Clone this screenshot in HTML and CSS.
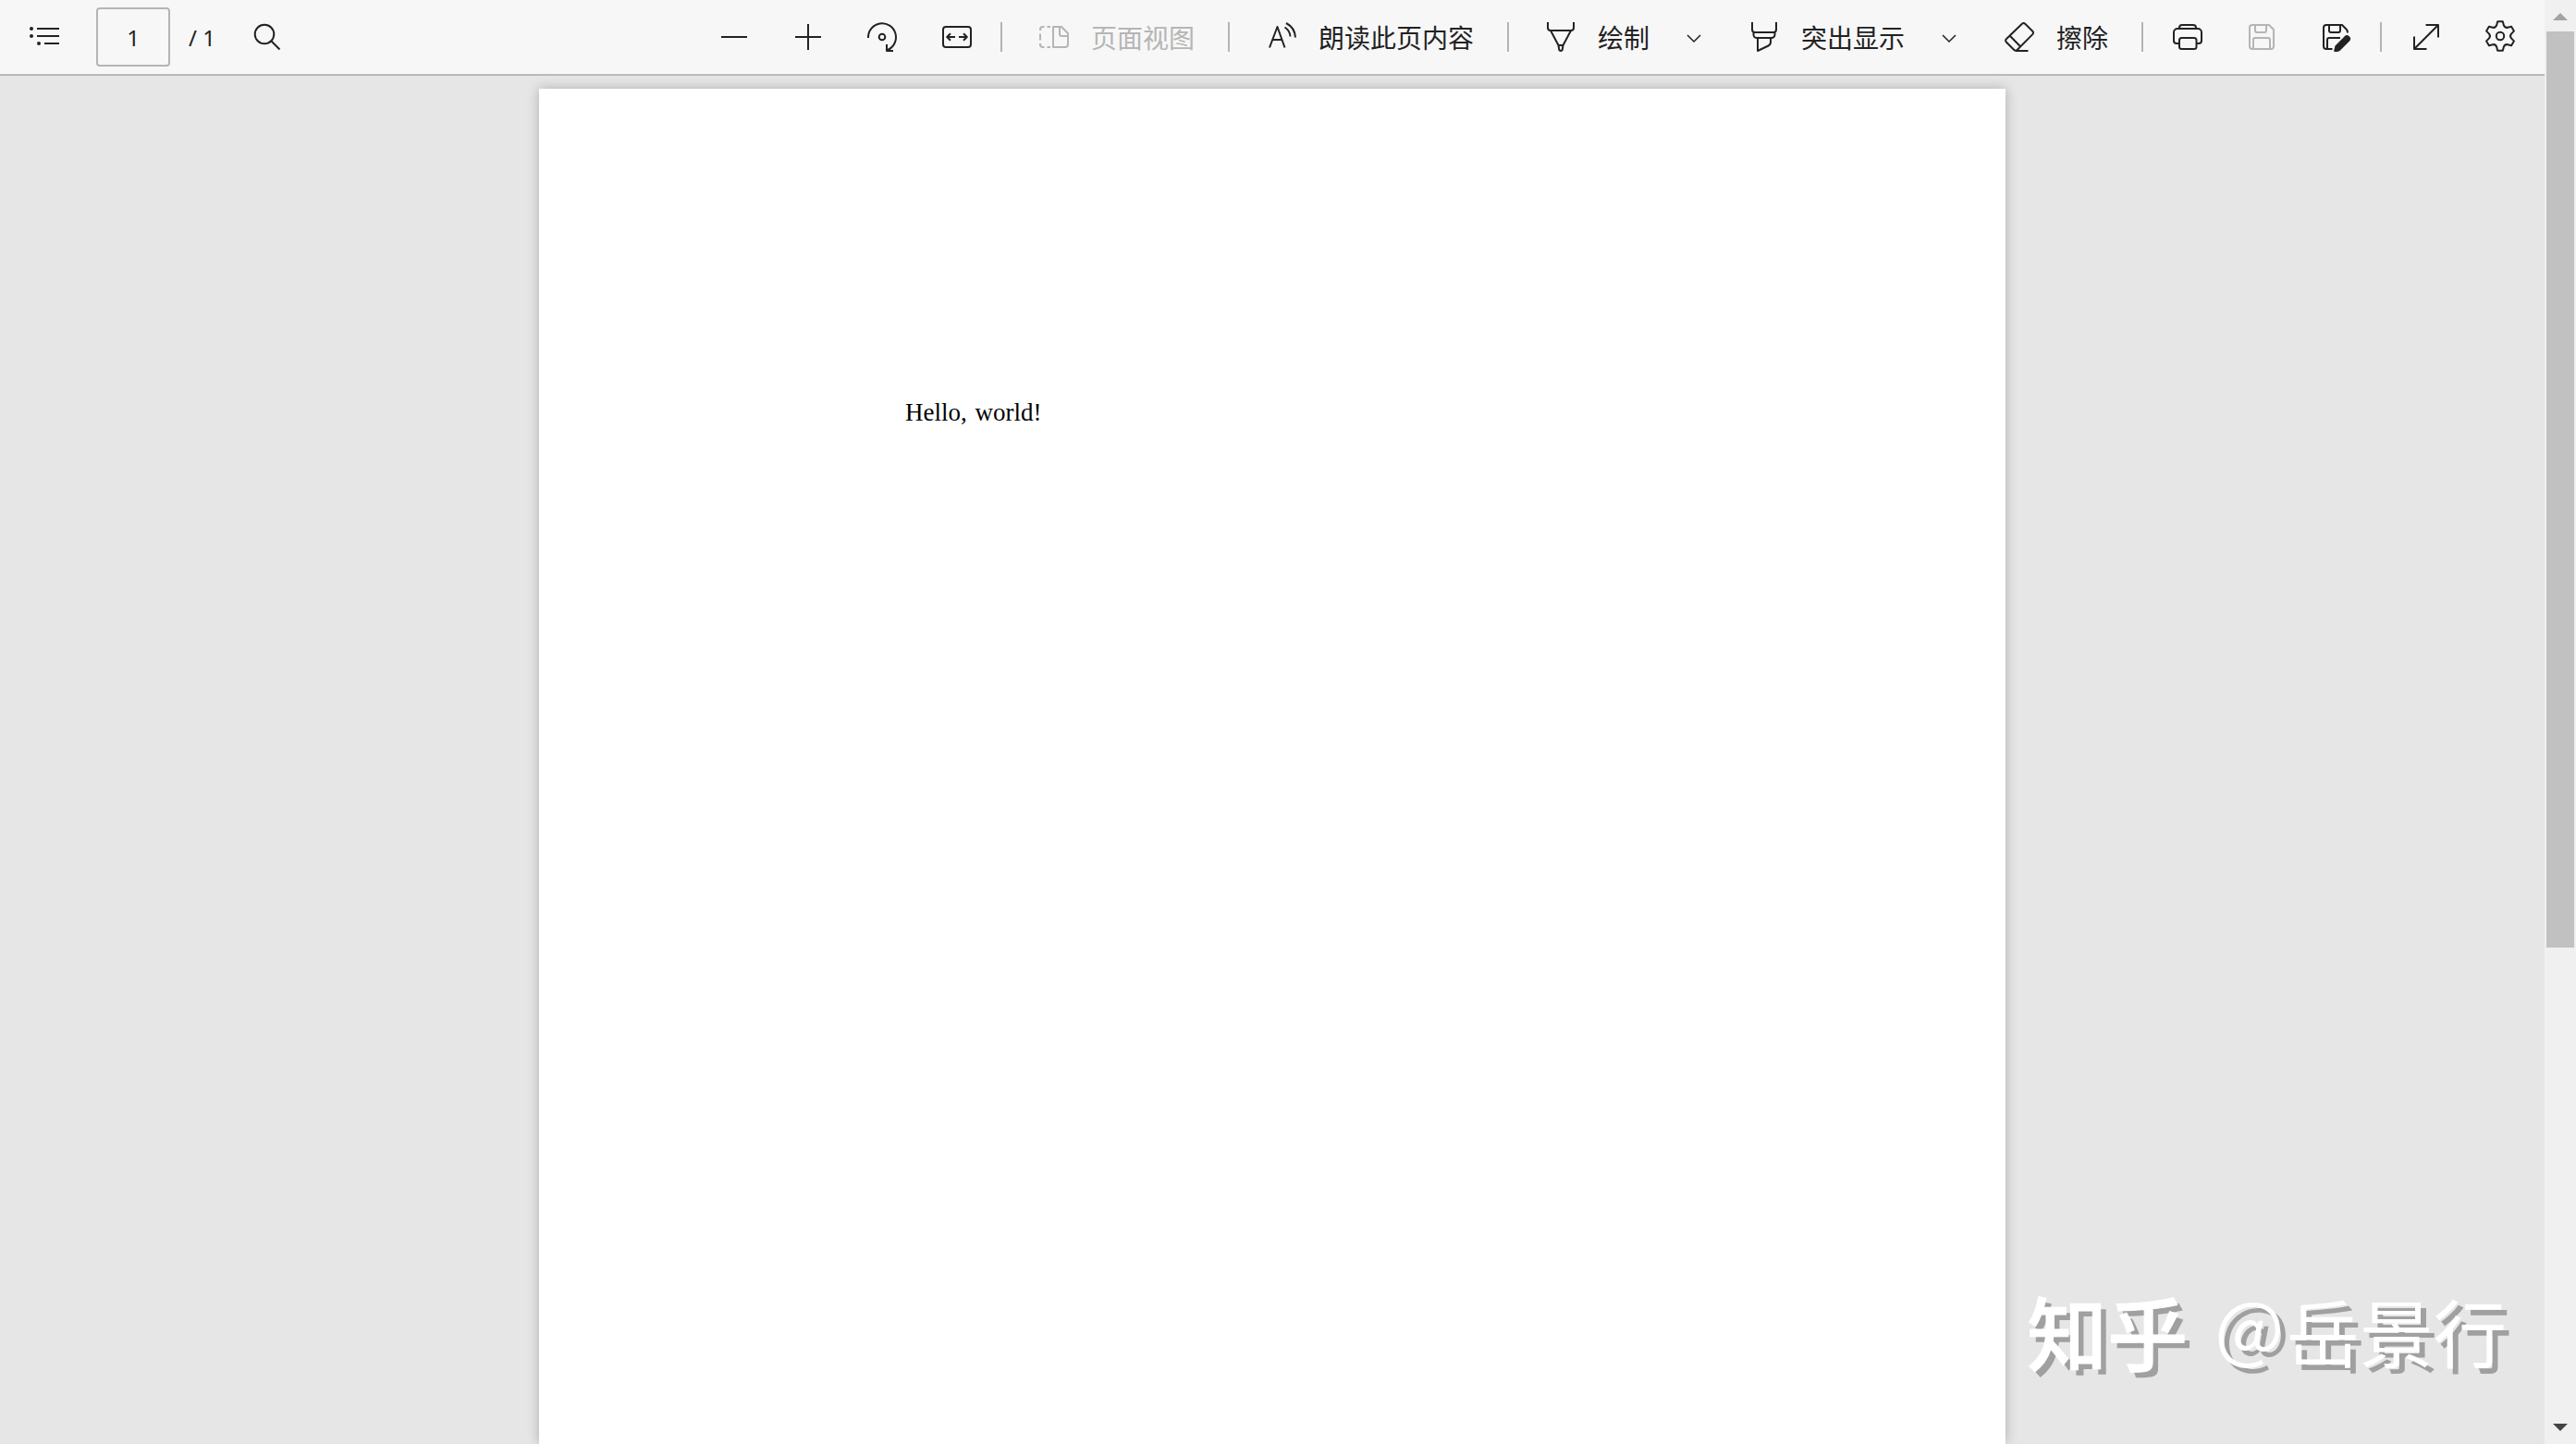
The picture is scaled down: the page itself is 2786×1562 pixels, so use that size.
FILE: index.html
```html
<!DOCTYPE html>
<html lang="zh-CN">
<head>
    <meta charset="UTF-8">
    <meta name="viewport" content="width=device-width, initial-scale=1.0">
    <title>Hello, world!</title>
    <link rel="stylesheet" href="styles.css">
</head>
<body>
    <div class="viewer">
        <header class="toolbar">
            <div class="group">
                <button class="icon-button" aria-label="目录">
                    <svg class="icon" viewBox="0 0 32 32"><path d="M8 7h24M8 15h24M16 23h16"/><g class="solid"><circle cx="2" cy="7" r="2"/><circle cx="2" cy="15" r="2"/><circle cx="10" cy="23" r="2"/></g></svg>
                </button>
                <div class="page-input">1</div>
                <span class="page-total">/ 1</span>
                <button class="icon-button" aria-label="查找">
                    <svg class="icon" viewBox="0 0 32 32"><circle cx="14" cy="13" r="10.3"/><path d="M21.5 20.5l9 9"/></svg>
                </button>
            </div>

            <div class="group">
                <button class="icon-button" aria-label="缩小">
                    <svg class="icon" viewBox="0 0 32 32"><path d="M2 16h28"/></svg>
                </button>
                <button class="icon-button" aria-label="放大">
                    <svg class="icon" viewBox="0 0 32 32"><path d="M2 16h28M16 2v28"/></svg>
                </button>
                <button class="icon-button" aria-label="旋转">
                    <svg class="icon" viewBox="0 0 32 32"><path d="M1 17A15 15 0 1 1 21.5 30.2M21 24v7h7"/><circle cx="16" cy="16" r="3.3"/></svg>
                </button>
                <button class="icon-button" aria-label="适应宽度">
                    <svg class="icon" viewBox="0 0 32 32"><rect x="2" y="5" width="30" height="22" rx="3"/><path d="M15 16H6.500M10 12.200L6.200 16L10 19.800M19 16h8.500M24 12.200L27.800 16L24 19.800"/></svg>
                </button>
                <span class="separator"></span>
                <button class="text-button disabled">
                    <svg class="icon" viewBox="0 0 32 32"><path d="M15 5h9l7 7v12a3 3 0 0 1-3 3H15zM22 5v7.500a2.500 2.500 0 0 0 2.500 2.500H31M12 5H8.500M5.500 5H4a3 3 0 0 0-3 3v1M1 12.500v7M1 23v1a3 3 0 0 0 3 3h1.500M8.500 27H12"/></svg>
                    <span>页面视图</span>
                </button>
                <span class="separator"></span>
                <button class="text-button">
                    <svg class="icon" viewBox="0 0 32 32"><path d="M3 27.500L11.500 5L19.500 27.500M5.800 19h10.800M19.500 5.500Q25 9 25.500 15.500M21 1Q30.500 6 31 16.500"/></svg>
                    <span>朗读此页内容</span>
                </button>
                <span class="separator"></span>
                <button class="text-button">
                    <svg class="icon" viewBox="0 0 32 32"><path d="M2 0v6a3 3 0 0 0 3 3h22a3 3 0 0 0 3-3V0M5 9l8.500 16M27 9l-8.500 16M13.500 25h5l-.8 5q-1.700 1.800-3.400 0z"/></svg>
                    <span>绘制</span>
                </button>
                <button class="chevron" aria-label="绘制选项">
                    <svg viewBox="0 0 16 10"><path d="M1 1l7 7l7-7"/></svg>
                </button>
                <button class="text-button">
                    <svg class="icon" viewBox="0 0 32 32"><path d="M3 0v8a3 3 0 0 0 3 3h20a3 3 0 0 0 3-3V0M4.500 11v2.500a3.500 3.500 0 0 0 3.500 3.500h16a3.500 3.500 0 0 0 3.500-3.500V11M9 17v14l11.500-5.500a4.500 4.500 0 0 0 2.500-4V17"/></svg>
                    <span>突出显示</span>
                </button>
                <button class="chevron" aria-label="突出显示选项">
                    <svg viewBox="0 0 16 10"><path d="M1 1l7 7l7-7"/></svg>
                </button>
                <button class="text-button">
                    <svg class="icon" viewBox="0 0 32 32"><path d="M18.900 1.700a2.300 2.300 0 0 1 3.300 0l8.100 8.100a2.300 2.300 0 0 1 0 3.300L13.600 30a2.300 2.300 0 0 1-3.300 0l-8.500-8.500a2.300 2.300 0 0 1 0-3.300zM6 15l10.800 11M12 31h13.500"/></svg>
                    <span>擦除</span>
                </button>
                <span class="separator"></span>
                <button class="icon-button" aria-label="打印">
                    <svg class="icon" viewBox="0 0 32 32"><path d="M7 7V6a3 3 0 0 1 3-3h12a3 3 0 0 1 3 3v1M7 23H4a3 3 0 0 1-3-3V11a4 4 0 0 1 4-4h22a4 4 0 0 1 4 4v9a3 3 0 0 1-3 3h-3"/><rect x="7" y="17" width="18.500" height="12" rx="2.500"/></svg>
                </button>
                <button class="icon-button disabled" aria-label="保存">
                    <svg class="icon" viewBox="0 0 32 32"><path d="M6 3h18l5 5v18a3 3 0 0 1-3 3H6a3 3 0 0 1-3-3V6a3 3 0 0 1 3-3zM9 3v6a2 2 0 0 0 2 2h8a2 2 0 0 0 2-2V3M7 29V19a2 2 0 0 1 2-2h14a2 2 0 0 1 2 2v10"/></svg>
                </button>
                <button class="icon-button" aria-label="另存为">
                    <svg class="icon" viewBox="0 0 32 32"><path d="M12.500 29H6a3 3 0 0 1-3-3V6a3 3 0 0 1 3-3h17l4.500 4.500q1.500 1.500 1.500 4M9 3v6a2 2 0 0 0 2 2h8a2 2 0 0 0 2-2V3M7 29V19a2 2 0 0 1 2-2h12"/><path class="solid" d="M14 31.500l1.500-6L25.500 15.500a3.700 3.700 0 0 1 5.500 5L21 30.500q-3 2.500-7 1z"/></svg>
                </button>
                <span class="separator"></span>
                <button class="icon-button" aria-label="全屏">
                    <svg class="icon" viewBox="0 0 32 32"><path d="M3 29L29 3M15.500 3H29v13.500M3 15.500V29h13.500"/></svg>
                </button>
                <button class="icon-button" aria-label="设置">
                    <svg class="icon" viewBox="-16 -15 32 32"><path d="M-2.800-15.800H2.800L3.900-11.600Q5-8.700 8.100-9.200L12.100-10.200L14.900-5.400L12-2.400Q10 0 12 2.400L14.900 5.400L12.100 10.200L8.100 9.200Q5 8.700 3.900 11.600L2.800 15.800H-2.800L-3.900 11.600Q-5 8.700-8.100 9.200L-12.100 10.200L-14.900 5.400L-12 2.400Q-10 0-12-2.400L-14.900-5.400L-12.100-10.200L-8.100-9.200Q-5-8.700-3.900-11.600z"/><circle r="4.200"/></svg>
                </button>
            </div>
        </header>

        <main class="document">
            <div class="page">
                <p>Hello, world!</p>
            </div>
        </main>
    </div>

    <!-- Scrollbar -->
    <div class="scrollbar">
        <svg class="arrow up" viewBox="0 0 16 8"><path d="M0 8l8-8l8 8z"/></svg>
        <div class="thumb"></div>
        <svg class="arrow down" viewBox="0 0 16 8"><path d="M0 0l8 8l8-8z"/></svg>
    </div>

    <!-- Watermark -->
    <div class="watermark">
        <span class="brand">知乎</span>
        <span class="author"><span class="at">@</span>岳景行</span>
    </div>
</body>
</html>
```
FILE: styles.css
```css
* {
    box-sizing: border-box;
}
body {
    margin: 0;
    display: flex;
    height: 100vh;
    overflow: hidden;
    font-family: "Noto Sans", "Noto Sans CJK SC", sans-serif;
    background: #e6e6e6;
    color: #222;
}
.viewer {
    flex: 1;
    display: flex;
    flex-direction: column;
}
.toolbar {
    display: flex;
    justify-content: space-between;
    height: 82px;
    padding: 0 8px;
    background: #f7f7f7;
    border-bottom: 2px solid #b9b9b9;
    position: relative;
}
.group {
    display: flex;
    align-items: center;
}
button {
    display: flex;
    align-items: center;
    height: 64px;
    padding: 0;
    border: none;
    background: none;
    font: inherit;
    color: inherit;
}
.icon-button {
    justify-content: center;
    width: 80px;
}
.text-button {
    gap: 24px;
    padding: 0 28px 0 32px;
    font-family: "Noto Sans CJK SC", sans-serif;
    font-size: 28px;
    line-height: 40px;
    white-space: nowrap;
}
.chevron {
    justify-content: center;
    width: 40px;
    margin-right: 8px;
}
.chevron svg {
    width: 16px;
    height: 10px;
    margin-top: 4px;
    fill: none;
    stroke: currentColor;
    stroke-width: 1.5;
}
.disabled {
    color: #b5b5b5;
}
.icon {
    width: 32px;
    height: 32px;
    overflow: visible;
    fill: none;
    stroke: currentColor;
    stroke-width: 2;
    stroke-linejoin: round;
}
.icon .solid {
    fill: currentColor;
    stroke: none;
}
.separator {
    width: 2px;
    height: 32px;
    margin: 0 8px;
    background: #b4b4b4;
}
.page-input {
    width: 80px;
    height: 64px;
    margin-left: 16px;
    border: 2px solid #b4b4b4;
    border-radius: 4px;
    font-size: 24px;
    line-height: 62px;
    text-align: center;
}
.page-total {
    width: 44px;
    margin-left: 20px;
    font-size: 24px;
    line-height: 62px;
    padding-top: 2px;
    white-space: nowrap;
}
.document {
    flex: 1;
    display: flex;
    justify-content: center;
    padding-top: 14px;
    overflow: hidden;
}
.page {
    width: 1586px;
    background: #fff;
    box-shadow: 0 0 12px rgba(0, 0, 0, 0.25);
}
.page p {
    margin: 334px 0 0 396px;
    font-family: "Liberation Serif", serif;
    font-size: 27px;
    line-height: 32px;
    word-spacing: 2px;
    color: #000;
}
.scrollbar {
    display: flex;
    flex-direction: column;
    align-items: center;
    width: 34px;
    background: #f0f0f0;
}
.arrow {
    width: 16px;
    height: 8px;
}
.up {
    margin: 14px 0 12px;
    fill: #a3a3a3;
}
.down {
    margin: auto 0 14px;
    fill: #444;
}
.thumb {
    width: 30px;
    height: 991px;
    background: #c1c1c1;
}
.watermark {
    position: absolute;
    right: 75px;
    bottom: 67px;
    display: flex;
    align-items: center;
    gap: 29px;
    font-family: "Noto Sans CJK SC", sans-serif;
    line-height: 112px;
    color: #fff;
    text-shadow: 6px 6px 0 #a0a0a0;
}
.brand {
    font-size: 87px;
    font-weight: 500;
    -webkit-text-stroke: 1px #fff;
}
.author {
    font-size: 79.5px;
    font-weight: 400;
}
.at {
    display: inline-block;
    margin-right: 2px;
    transform: translateY(-7px);
}
```
